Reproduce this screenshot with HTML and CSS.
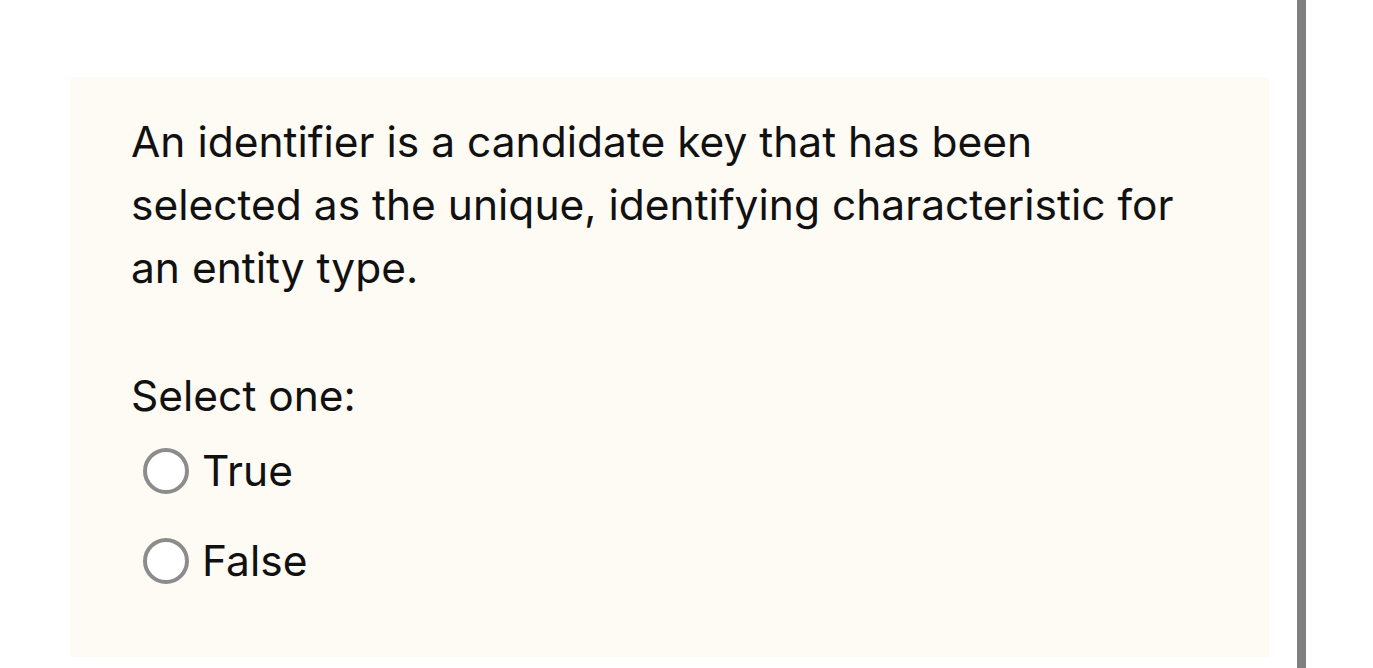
FILE: index.html
```html
<!DOCTYPE html>
<html>
<head>
<meta charset="utf-8">
<link rel="stylesheet" href="styles.css">
</head>
<body>
<div class="page">
  <div class="card">
    <p class="question">An identifier is a candidate key that has been selected as the unique, identifying characteristic for an entity type.</p>
    <div class="prompt">Select one:</div>
    <div class="options">
      <label class="option"><span class="radio"></span><span class="label">True</span></label>
      <label class="option"><span class="radio"></span><span class="label">False</span></label>
    </div>
  </div>
  <div class="bar"></div>
</div>
</body>
</html>
```
FILE: styles.css
```css
html, body {
  margin: 0;
  padding: 0;
  background: #ffffff;
  height: 668px;
  overflow: hidden;
}
.page {
  display: flex;
  align-items: flex-start;
  height: 668px;
  font-family: Inter, "Noto Sans", sans-serif;
  color: #111111;
}
.card {
  margin-top: 77px;
  margin-left: 70px;
  width: 1199px;
  height: 580px;
  box-sizing: border-box;
  background: #fdfbf4;
  padding: 33px 0 0 61px;
}
.question {
  margin: 0;
  width: 1070px;
  font-size: 42.5px;
  line-height: 63px;
}
.prompt {
  margin-top: 65px;
  font-size: 42.5px;
  line-height: 63px;
}
.options {
  display: flex;
  flex-direction: column;
  gap: 27px;
  margin-top: 12px;
  padding-left: 12px;
}
.option {
  display: flex;
  align-items: center;
  gap: 13px;
  font-size: 42.5px;
  line-height: 63px;
}
.radio {
  width: 38px;
  height: 38px;
  border: 4px solid #8c8c8c;
  border-radius: 50%;
  background: #ffffff;
  flex: none;
}
.bar {
  margin-left: 28px;
  width: 9px;
  height: 668px;
  background: #808080;
}
```
